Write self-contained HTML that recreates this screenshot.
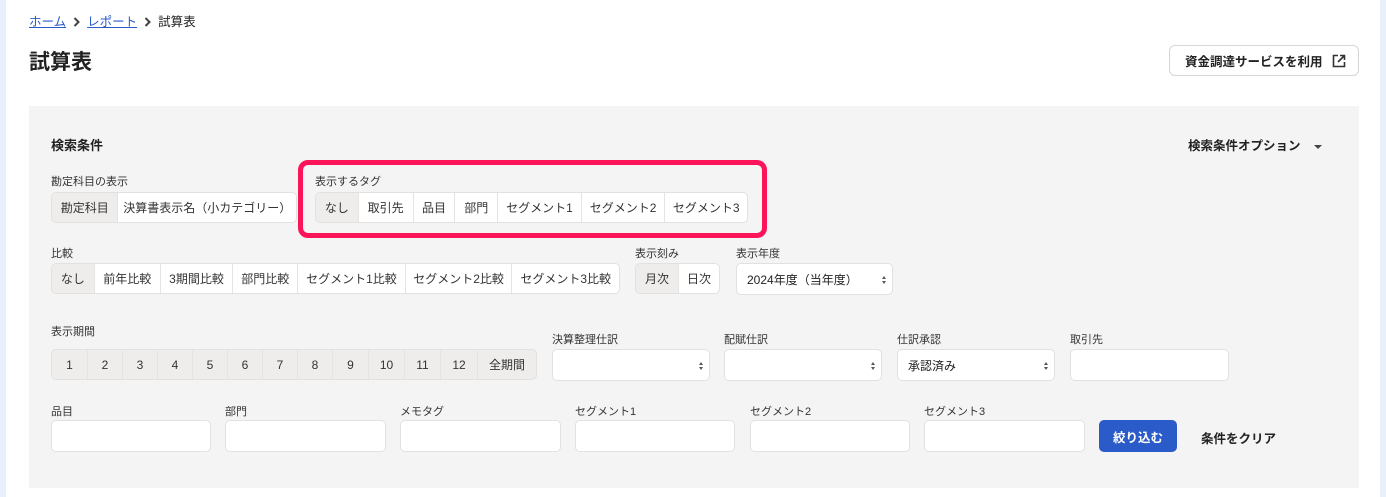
<!DOCTYPE html>
<html><head><meta charset="utf-8"><style>
*{box-sizing:border-box;margin:0;padding:0}
body{width:1386px;height:497px;background:#fff;font-family:"Liberation Sans","Noto Sans CJK JP",sans-serif;color:#222;position:relative;overflow:hidden}
.a{position:absolute}
.lb{position:absolute;font-size:11px;color:#333;white-space:nowrap}
.grp{position:absolute;display:flex;height:31px;border:1px solid #e3e1e0;border-radius:5px;overflow:hidden;background:#fff}
.grp div{display:flex;align-items:center;justify-content:center;font-size:12px;color:#333;border-left:1px solid #e6e4e3;white-space:nowrap}
.grp div:first-child{border-left:none}
.grp .on{background:#eeedeb}
.in{position:absolute;height:32px;background:#fff;border:1px solid #e3e1e0;border-radius:5px;font-size:12px;display:flex;align-items:center;padding-left:10px}
.sel::after{content:"";position:absolute;right:6px;top:12px;width:0;height:0;border-left:2px solid transparent;border-right:2px solid transparent;border-bottom:3px solid #555}
.sel::before{content:"";position:absolute;right:6px;top:17px;width:0;height:0;border-left:2px solid transparent;border-right:2px solid transparent;border-top:3px solid #555}
.chev{display:inline-block;margin:0 7px;vertical-align:-1px}
</style></head><body>
<div class="a" style="left:0;top:0;width:6px;height:497px;background:#e9f0fb"></div>
<div class="a" style="left:1380px;top:0;width:6px;height:497px;background:#e9f0fb"></div>
<div class="a" style="left:29px;top:11px;font-size:12.5px;white-space:nowrap"><span style="color:#2a5bc8;text-decoration:underline">ホーム</span><svg class="chev" width="7" height="10" viewBox="0 0 7 10" fill="none" stroke="#444" stroke-width="2"><path d="M1.5 1l4 4-4 4"/></svg><span style="color:#2a5bc8;text-decoration:underline">レポート</span><svg class="chev" width="7" height="10" viewBox="0 0 7 10" fill="none" stroke="#444" stroke-width="2"><path d="M1.5 1l4 4-4 4"/></svg>試算表</div>
<div class="a" style="left:29px;top:46px;font-size:21px;font-weight:bold">試算表</div>
<div class="a" style="left:1169px;top:45px;width:190px;height:31px;border:1px solid #d8d6d5;border-radius:6px;display:flex;align-items:center;padding-left:15px;font-size:12.5px;font-weight:bold">資金調達サービスを利用
<svg style="margin-left:9px" width="14" height="14" viewBox="0 0 14 14" fill="none" stroke="#333" stroke-width="1.6"><path d="M6 1.5H1.5v11h11V8"/><path d="M8 1.5h4.5V6M12.5 1.5L6 8"/></svg></div>
<div class="a" style="left:29px;top:106px;width:1330px;height:382px;background:#f5f4f4"></div>
<div class="a" style="left:51px;top:135px;font-size:13px;font-weight:bold">検索条件</div>
<div class="a" style="left:1188px;top:135px;font-size:12.5px;font-weight:bold">検索条件オプション <span style="display:inline-block;margin-left:10px;border-left:4px solid transparent;border-right:4px solid transparent;border-top:4px solid #444;vertical-align:middle"></span></div>

<div class="lb" style="left:51px;top:173px">勘定科目の表示</div>
<div class="grp" style="left:51px;top:192px;width:246px"><div class="on" style="width:66px">勘定科目</div><div style="width:180px">決算書表示名（小カテゴリー）</div></div>

<div class="a" style="left:298px;top:160px;width:469px;height:78px;border:5px solid #fb1459;border-radius:10px"></div>
<div class="lb" style="left:315px;top:173px">表示するタグ</div>
<div class="grp" style="left:315px;top:192px;width:433px"><div class="on" style="width:42px">なし</div><div style="width:55px">取引先</div><div style="width:42px">品目</div><div style="width:43px">部門</div><div style="width:84px">セグメント1</div><div style="width:84px">セグメント2</div><div style="width:83px">セグメント3</div></div>

<div class="lb" style="left:51px;top:245px">比較</div>
<div class="grp" style="left:51px;top:263px;width:569px"><div class="on" style="width:42px">なし</div><div style="width:66px">前年比較</div><div style="width:73px">3期間比較</div><div style="width:65px">部門比較</div><div style="width:108px">セグメント1比較</div><div style="width:107px">セグメント2比較</div><div style="width:108px">セグメント3比較</div></div>
<div class="lb" style="left:635px;top:245px">表示刻み</div>
<div class="grp" style="left:635px;top:263px;width:85px"><div class="on" style="width:43px">月次</div><div style="width:42px">日次</div></div>
<div class="lb" style="left:736px;top:245px">表示年度</div>
<div class="in sel" style="left:736px;top:263px;width:157px">2024年度（当年度）</div>

<div class="lb" style="left:51px;top:323px">表示期間</div>
<div class="grp" style="left:51px;top:349px;width:486px;background:#eeedeb"><div style="width:35px">1</div><div style="width:35px">2</div><div style="width:35px">3</div><div style="width:35px">4</div><div style="width:35px">5</div><div style="width:35px">6</div><div style="width:35px">7</div><div style="width:35px">8</div><div style="width:36px">9</div><div style="width:36px">10</div><div style="width:36px">11</div><div style="width:37px">12</div><div style="width:59px">全期間</div></div>
<div class="lb" style="left:552px;top:331px">決算整理仕訳</div>
<div class="in sel" style="left:552px;top:349px;width:158px"></div>
<div class="lb" style="left:724px;top:331px">配賦仕訳</div>
<div class="in sel" style="left:724px;top:349px;width:158px"></div>
<div class="lb" style="left:897px;top:331px">仕訳承認</div>
<div class="in sel" style="left:897px;top:349px;width:158px">承認済み</div>
<div class="lb" style="left:1070px;top:331px">取引先</div>
<div class="in" style="left:1070px;top:349px;width:159px"></div>

<div class="lb" style="left:51px;top:403px">品目</div><div class="in" style="left:51px;top:420px;width:160px"></div>
<div class="lb" style="left:225px;top:403px">部門</div><div class="in" style="left:225px;top:420px;width:161px"></div>
<div class="lb" style="left:400px;top:403px">メモタグ</div><div class="in" style="left:400px;top:420px;width:161px"></div>
<div class="lb" style="left:575px;top:403px">セグメント1</div><div class="in" style="left:575px;top:420px;width:160px"></div>
<div class="lb" style="left:750px;top:403px">セグメント2</div><div class="in" style="left:750px;top:420px;width:160px"></div>
<div class="lb" style="left:924px;top:403px">セグメント3</div><div class="in" style="left:924px;top:420px;width:161px"></div>
<div class="a" style="left:1099px;top:420px;width:78px;height:32px;background:#2a5bc8;border-radius:5px;color:#fff;font-size:12.5px;font-weight:bold;display:flex;align-items:center;justify-content:center">絞り込む</div>
<div class="a" style="left:1201px;top:428px;font-size:12.5px;font-weight:bold">条件をクリア</div>
</body></html>
